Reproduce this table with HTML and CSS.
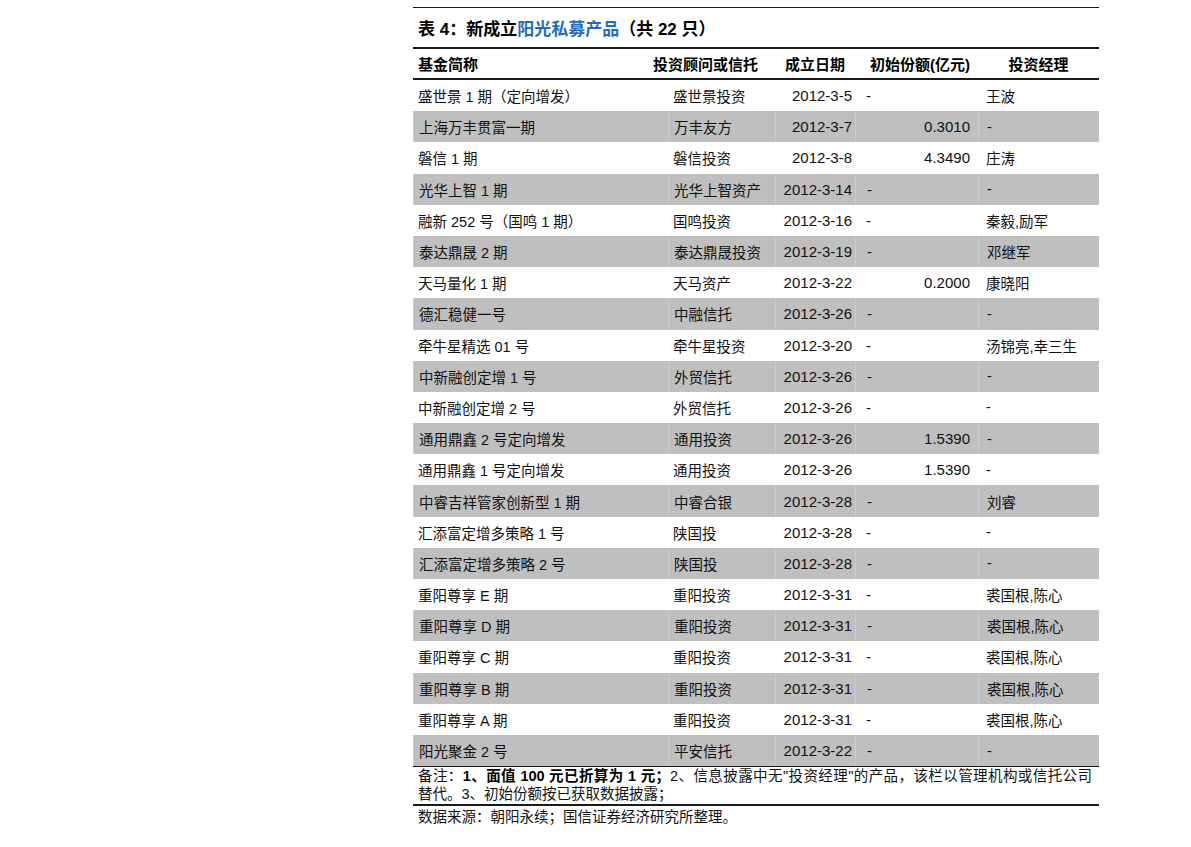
FILE: index.html
```html
<!DOCTYPE html>
<html lang="zh-CN">
<head>
<meta charset="utf-8">
<title>新成立阳光私募产品</title>
<link rel="stylesheet" href="styles.css">
</head>
<body>
<div class="sheet">
  <div class="title">表 4：新成立<span class="blue">阳光私募产品</span>（共 22 只）</div>
  <div class="row head">
    <div class="c1">基金简称</div>
    <div class="c2">投资顾问或信托</div>
    <div class="c3">成立日期</div>
    <div class="c4">初始份额(亿元)</div>
    <div class="c5">投资经理</div>
  </div>
  <div class="body">
    <div class="row"><div class="c1">盛世景 1 期（定向增发）</div><div class="c2">盛世景投资</div><div class="c3">2012-3-5</div><div class="c4">-</div><div class="c5">王波</div></div>
    <div class="row gray"><div class="c1">上海万丰贯富一期</div><div class="c2">万丰友方</div><div class="c3">2012-3-7</div><div class="c4 num">0.3010</div><div class="c5">-</div></div>
    <div class="row"><div class="c1">磐信 1 期</div><div class="c2">磐信投资</div><div class="c3">2012-3-8</div><div class="c4 num">4.3490</div><div class="c5">庄涛</div></div>
    <div class="row gray"><div class="c1">光华上智 1 期</div><div class="c2">光华上智资产</div><div class="c3">2012-3-14</div><div class="c4">-</div><div class="c5">-</div></div>
    <div class="row"><div class="c1">融新 252 号（国鸣 1 期）</div><div class="c2">国鸣投资</div><div class="c3">2012-3-16</div><div class="c4">-</div><div class="c5">秦毅,励军</div></div>
    <div class="row gray"><div class="c1">泰达鼎晟 2 期</div><div class="c2">泰达鼎晟投资</div><div class="c3">2012-3-19</div><div class="c4">-</div><div class="c5">邓继军</div></div>
    <div class="row"><div class="c1">天马量化 1 期</div><div class="c2">天马资产</div><div class="c3">2012-3-22</div><div class="c4 num">0.2000</div><div class="c5">康晓阳</div></div>
    <div class="row gray"><div class="c1">德汇稳健一号</div><div class="c2">中融信托</div><div class="c3">2012-3-26</div><div class="c4">-</div><div class="c5">-</div></div>
    <div class="row"><div class="c1">牵牛星精选 01 号</div><div class="c2">牵牛星投资</div><div class="c3">2012-3-20</div><div class="c4">-</div><div class="c5">汤锦亮,幸三生</div></div>
    <div class="row gray"><div class="c1">中新融创定增 1 号</div><div class="c2">外贸信托</div><div class="c3">2012-3-26</div><div class="c4">-</div><div class="c5">-</div></div>
    <div class="row"><div class="c1">中新融创定增 2 号</div><div class="c2">外贸信托</div><div class="c3">2012-3-26</div><div class="c4">-</div><div class="c5">-</div></div>
    <div class="row gray"><div class="c1">通用鼎鑫 2 号定向增发</div><div class="c2">通用投资</div><div class="c3">2012-3-26</div><div class="c4 num">1.5390</div><div class="c5">-</div></div>
    <div class="row"><div class="c1">通用鼎鑫 1 号定向增发</div><div class="c2">通用投资</div><div class="c3">2012-3-26</div><div class="c4 num">1.5390</div><div class="c5">-</div></div>
    <div class="row gray"><div class="c1">中睿吉祥管家创新型 1 期</div><div class="c2">中睿合银</div><div class="c3">2012-3-28</div><div class="c4">-</div><div class="c5">刘睿</div></div>
    <div class="row"><div class="c1">汇添富定增多策略 1 号</div><div class="c2">陕国投</div><div class="c3">2012-3-28</div><div class="c4">-</div><div class="c5">-</div></div>
    <div class="row gray"><div class="c1">汇添富定增多策略 2 号</div><div class="c2">陕国投</div><div class="c3">2012-3-28</div><div class="c4">-</div><div class="c5">-</div></div>
    <div class="row"><div class="c1">重阳尊享 E 期</div><div class="c2">重阳投资</div><div class="c3">2012-3-31</div><div class="c4">-</div><div class="c5">裘国根,陈心</div></div>
    <div class="row gray"><div class="c1">重阳尊享 D 期</div><div class="c2">重阳投资</div><div class="c3">2012-3-31</div><div class="c4">-</div><div class="c5">裘国根,陈心</div></div>
    <div class="row"><div class="c1">重阳尊享 C 期</div><div class="c2">重阳投资</div><div class="c3">2012-3-31</div><div class="c4">-</div><div class="c5">裘国根,陈心</div></div>
    <div class="row gray"><div class="c1">重阳尊享 B 期</div><div class="c2">重阳投资</div><div class="c3">2012-3-31</div><div class="c4">-</div><div class="c5">裘国根,陈心</div></div>
    <div class="row"><div class="c1">重阳尊享 A 期</div><div class="c2">重阳投资</div><div class="c3">2012-3-31</div><div class="c4">-</div><div class="c5">裘国根,陈心</div></div>
    <div class="row gray"><div class="c1">阳光聚金 2 号</div><div class="c2">平安信托</div><div class="c3">2012-3-22</div><div class="c4">-</div><div class="c5">-</div></div>
  </div>
  <div class="notes">
    <span class="line1">备注：<b>1、面值 100 元已折算为 1 元；</b>2、信息披露中无"投资经理"的产品，该栏以管理机构或信托公司</span>
    <span class="line2">替代。3、初始份额按已获取数据披露；</span>
  </div>
  <div class="source">数据来源：朝阳永续；国信证券经济研究所整理。</div>
</div>
</body>
</html>
```
FILE: styles.css
```css
html, body {
  margin: 0;
  padding: 0;
  background: #ffffff;
}
body {
  font-family: "Liberation Sans", "Noto Sans CJK SC", sans-serif;
  color: #111;
  text-spacing-trim: space-all;
}
.sheet {
  width: 686px;
  margin: 7px 0 0 413px;
  border-top: 1px solid #1a1a1a;
}
.title {
  height: 37px;
  padding-top: 2px;
  line-height: 40px;
  padding-left: 5px;
  font-size: 17px;
  font-weight: bold;
  color: #000;
  border-bottom: 2px solid #1a1a1a;
  white-space: nowrap;
}
.blue {
  color: #1f6dc0;
}
.row {
  display: grid;
  grid-template-columns: 255px 107px 80px 123px 121px;
  height: 31.2px;
  align-items: center;
  font-size: 14.5px;
  white-space: nowrap;
}
.row > div {
  height: 100%;
  display: flex;
  align-items: center;
  box-sizing: border-box;
}
.row.head {
  height: 29px;
  font-size: 15px;
  font-weight: bold;
  color: #000;
  border-bottom: 2px solid #1a1a1a;
}
.body {
  border-bottom: 1px solid #1a1a1a;
}
.row.gray {
  background: #bfbfbf;
}
.row.gray > div {
  border-left: 1px solid #cdcdcd;
}
.c1 { padding-left: 5px; }
.c2 { padding-left: 5px; }
.c3 { justify-content: flex-end; padding-right: 3px; font-size: 15px; }
.c4 { padding-left: 11px; font-size: 15px; }
.c4.num { justify-content: flex-end; padding-left: 0; padding-right: 8px; }
.c5 { padding-left: 8px; }
.head .c2 { justify-content: flex-end; padding-left: 0; padding-right: 17px; }
.head .c3 { justify-content: center; padding-right: 0; font-size: 15px; }
.head .c4 { padding-left: 15px; font-size: 15px; }
.head .c5 { justify-content: center; padding-left: 0; }
.notes {
  padding: 0 7px 1px 5px;
  font-size: 14.5px;
  line-height: 18px;
  border-bottom: 2px solid #1a1a1a;
}
.notes b {
  font-weight: bold;
  color: #000;
}
.line1 {
  display: block;
  text-align: justify;
  text-align-last: justify;
}
.line2 {
  display: block;
}
.source {
  padding-left: 5px;
  font-size: 14.5px;
  line-height: 23px;
}
```
